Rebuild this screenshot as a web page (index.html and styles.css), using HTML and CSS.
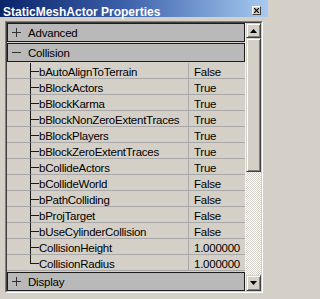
FILE: index.html
```html
<!DOCTYPE html>
<html>
<head>
<meta charset="utf-8">
<title>StaticMeshActor Properties</title>
<link rel="stylesheet" href="styles.css">
</head>
<body>
<div class="window">
  <div class="titlebar">
    <span class="title">StaticMeshActor Properties</span>
    <span class="close"><svg width="5" height="5" viewBox="0 0 5 5"><path d="M0 0L5 5M5 0L0 5" stroke="#000" stroke-width="1.2"/></svg></span>
  </div>
  <div class="client">
    <div class="pane">
      <div class="pane-inner">
        <div class="grid">
          <div class="group">
            <svg class="expander" width="9" height="9" viewBox="0 0 9 9"><path d="M0 4.5H9M4.5 0V9" stroke="#303030" stroke-width="1"/></svg>
            <span class="label">Advanced</span>
          </div>
          <div class="group">
            <svg class="expander" width="9" height="9" viewBox="0 0 9 9"><path d="M0 4.5H9" stroke="#303030" stroke-width="1"/></svg>
            <span class="label">Collision</span>
          </div>
          <div class="rows">
            <div class="row"><div class="indent"></div><div class="tree"><div class="elbow"></div><div class="stem"></div></div><div class="name">bAutoAlignToTerrain</div><div class="value">False</div></div>
            <div class="row"><div class="indent"></div><div class="tree"><div class="elbow"></div><div class="stem"></div></div><div class="name">bBlockActors</div><div class="value">True</div></div>
            <div class="row"><div class="indent"></div><div class="tree"><div class="elbow"></div><div class="stem"></div></div><div class="name">bBlockKarma</div><div class="value">True</div></div>
            <div class="row"><div class="indent"></div><div class="tree"><div class="elbow"></div><div class="stem"></div></div><div class="name">bBlockNonZeroExtentTraces</div><div class="value">True</div></div>
            <div class="row"><div class="indent"></div><div class="tree"><div class="elbow"></div><div class="stem"></div></div><div class="name">bBlockPlayers</div><div class="value">True</div></div>
            <div class="row"><div class="indent"></div><div class="tree"><div class="elbow"></div><div class="stem"></div></div><div class="name">bBlockZeroExtentTraces</div><div class="value">True</div></div>
            <div class="row"><div class="indent"></div><div class="tree"><div class="elbow"></div><div class="stem"></div></div><div class="name">bCollideActors</div><div class="value">True</div></div>
            <div class="row"><div class="indent"></div><div class="tree"><div class="elbow"></div><div class="stem"></div></div><div class="name">bCollideWorld</div><div class="value">False</div></div>
            <div class="row"><div class="indent"></div><div class="tree"><div class="elbow"></div><div class="stem"></div></div><div class="name">bPathColliding</div><div class="value">False</div></div>
            <div class="row"><div class="indent"></div><div class="tree"><div class="elbow"></div><div class="stem"></div></div><div class="name">bProjTarget</div><div class="value">False</div></div>
            <div class="row"><div class="indent"></div><div class="tree"><div class="elbow"></div><div class="stem"></div></div><div class="name">bUseCylinderCollision</div><div class="value">False</div></div>
            <div class="row"><div class="indent"></div><div class="tree"><div class="elbow"></div><div class="stem"></div></div><div class="name">CollisionHeight</div><div class="value">1.000000</div></div>
            <div class="row last"><div class="indent"></div><div class="tree"><div class="elbow"></div><div class="stem"></div></div><div class="name">CollisionRadius</div><div class="value">1.000000</div></div>
          </div>
          <div class="group display">
            <svg class="expander" width="9" height="9" viewBox="0 0 9 9"><path d="M0 4.5H9M4.5 0V9" stroke="#303030" stroke-width="1"/></svg>
            <span class="label">Display</span>
          </div>
        </div>
        <div class="scrollbar">
          <div class="sbtn up"><svg width="7" height="4" viewBox="0 0 7 4"><path d="M3.5 0L7 4H0Z" fill="#000"/></svg></div>
          <div class="thumb"></div>
          <div class="track"></div>
          <div class="sbtn down"><svg width="7" height="4" viewBox="0 0 7 4"><path d="M0 0H7L3.5 4Z" fill="#000"/></svg></div>
        </div>
      </div>
    </div>
  </div>
</div>
</body>
</html>
```

FILE: styles.css
```css
html, body {
  margin: 0;
  padding: 0;
}

body {
  width: 268px;
  height: 299px;
  overflow: hidden;
  background: #d4d0c8;
  font-family: "Liberation Sans", Arial, sans-serif;
  font-size: 11.5px;
  color: #000;
}

.window {
  width: 268px;
  height: 299px;
  display: flex;
  flex-direction: column;
}

.titlebar {
  flex: none;
  height: 17px;
  box-sizing: border-box;
  padding: 0 7px 0 3px;
  display: flex;
  justify-content: space-between;
  align-items: flex-start;
  background: linear-gradient(to right, #0a246a 0%, #3a5ea8 45%, #a6caf0 100%);
}

.title {
  color: #fff;
  font-weight: bold;
  font-size: 12px;
  line-height: 12px;
  padding-top: 6px;
  white-space: nowrap;
}

.close {
  width: 9px;
  height: 9px;
  margin-top: 6px;
  box-sizing: border-box;
  background: #d4d0c8;
  border: 1px solid;
  border-color: #fff #404040 #404040 #fff;
  display: flex;
  align-items: center;
  justify-content: center;
}

.close svg {
  display: block;
}

.client {
  flex: 1;
  padding: 4px 5px 6px 5px;
  min-height: 0;
}

.pane {
  height: 100%;
  box-sizing: border-box;
  border: 1px solid;
  border-color: #808080 #ffffff #ffffff #808080;
}

.pane-inner {
  height: 100%;
  box-sizing: border-box;
  border: 1px solid;
  border-color: #404040 #d4d0c8 #d4d0c8 #404040;
  display: flex;
}

.grid {
  width: 238px;
  flex: none;
  border-right: 1px solid #f2f2f2;
  display: flex;
  flex-direction: column;
}

.group {
  height: 19px;
  flex: none;
  box-sizing: border-box;
  border: 1px solid #1c1c1c;
  background: #b9b9b9;
  margin-bottom: 1px;
  padding-left: 4px;
  display: flex;
  align-items: center;
}

.group.display {
  margin-top: 1px;
  margin-bottom: 0;
}

.expander {
  display: block;
  flex: none;
}

.label {
  margin-left: 7px;
  padding-top: 1px;
  line-height: 16px;
  letter-spacing: -0.2px;
  white-space: nowrap;
}

.rows {
  display: flex;
  flex-direction: column;
}

.row {
  display: flex;
  height: 16px;
}

.indent {
  width: 23px;
  flex: none;
  box-sizing: border-box;
  border-bottom: 1px solid #a9a9a9;
}

.tree {
  width: 9px;
  flex: none;
  display: flex;
  flex-direction: column;
}

.elbow {
  height: 9px;
  flex: none;
  box-sizing: border-box;
  border-left: 1px solid #1c1c1c;
  border-bottom: 1px solid #1c1c1c;
}

.stem {
  flex: 1;
  box-sizing: border-box;
  border-left: 1px solid #1c1c1c;
  border-bottom: 1px solid #a9a9a9;
}

.row.last .stem {
  border-left-color: transparent;
}

.name {
  width: 149px;
  flex: none;
  box-sizing: border-box;
  border-bottom: 1px solid #a9a9a9;
  padding-top: 4px;
  line-height: 11px;
  letter-spacing: -0.25px;
  white-space: nowrap;
  overflow: hidden;
}

.value {
  flex: 1;
  box-sizing: border-box;
  border-left: 1px solid #a9a9a9;
  border-bottom: 1px solid #a9a9a9;
  padding: 4px 0 0 5px;
  line-height: 11px;
  letter-spacing: -0.25px;
  white-space: nowrap;
}

.scrollbar {
  width: 15px;
  flex: none;
  display: flex;
  flex-direction: column;
}

.sbtn,
.thumb {
  box-sizing: border-box;
  background: #d4d0c8;
  border: 1px solid;
  border-color: #d4d0c8 #404040 #404040 #d4d0c8;
  box-shadow: inset 1px 1px #ffffff, inset -1px -1px #808080;
}

.sbtn {
  flex: none;
  display: flex;
  align-items: center;
  justify-content: center;
}

.sbtn svg {
  display: block;
}

.sbtn.up {
  height: 15px;
}

.sbtn.down {
  height: 16px;
}

.thumb {
  flex: none;
  height: 134px;
}

.track {
  flex: 1;
  background: repeating-conic-gradient(#ffffff 0 25%, #d4d0c8 0 50%) 0 0 / 2px 2px;
}
```
